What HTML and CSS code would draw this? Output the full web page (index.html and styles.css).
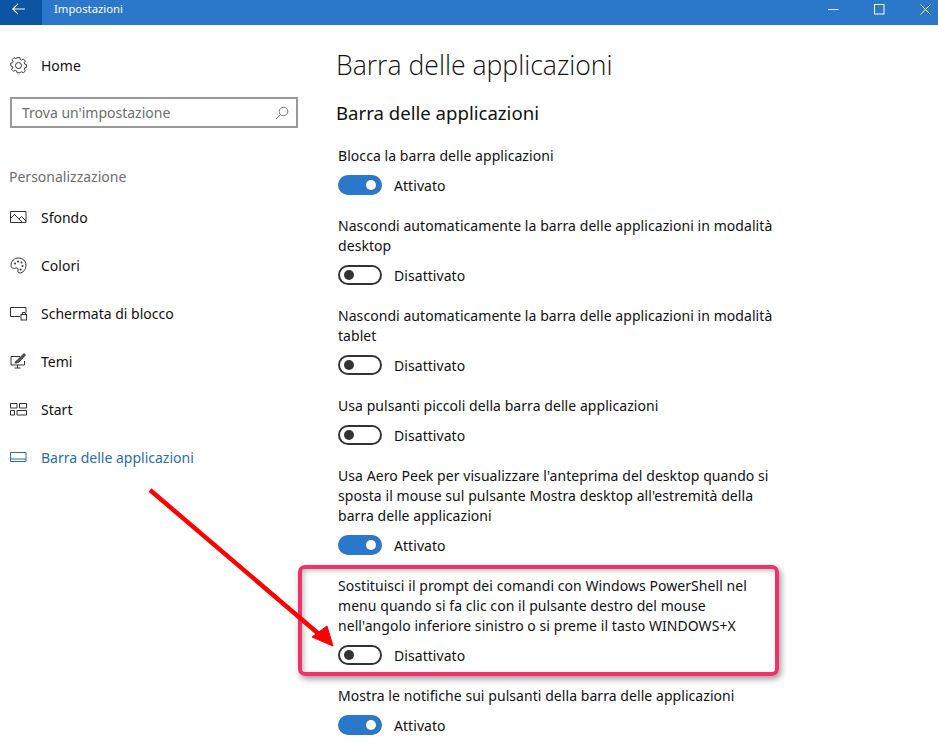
FILE: index.html
```html
<!DOCTYPE html>
<html lang="it">
<head>
<meta charset="utf-8">
<title>Impostazioni</title>
<link rel="stylesheet" href="styles.css">
</head>
<body>
<header class="titlebar">
  <div class="back"><svg width="13" height="12" viewBox="0 0 13 12"><path d="M.8 6H13M6 .8.800 6 6 11.200" fill="none" stroke="#fff" stroke-width="1.100"/></svg></div>
  <div class="apptitle">Impostazioni</div>
  <div class="winbtns">
    <svg width="11" height="11" viewBox="0 0 11 11"><path d="M0 5.500H10.500" stroke="#fff" fill="none"/></svg>
    <svg width="11" height="11" viewBox="0 0 11 11"><rect x=".5" y=".5" width="9.500" height="9.500" stroke="#fff" fill="none"/></svg>
    <svg width="11" height="11" viewBox="0 0 11 11"><path d="M.5.500 10.500 10.500M10.500.500.500 10.500" stroke="#fff" fill="none"/></svg>
  </div>
</header>
<div class="layout">
  <nav class="sidebar">
    <div class="navitem home">
      <svg class="ico" width="17" height="17" viewBox="0 0 17 17"><path d="M7 1h3l.4 2 1.500.7 1.800-1.100 2 2.100-1.100 1.700.6 1.600 1.900.4v2.900l-1.900.4-.6 1.600 1.100 1.700-2 2.100-1.800-1.100-1.500.7L10 17H7l-.4-1.900-1.500-.7-1.800 1.100-2-2.100 1.100-1.700-.6-1.600L.4 9.700V6.800l1.900-.4.6-1.600-1.100-1.700 2-2.100 1.800 1.100 1.500-.7z" transform="translate(.4 -.4) scale(.95)" fill="none" stroke="#333"/><circle cx="8.500" cy="8.500" r="3" fill="none" stroke="#333"/></svg>
      <span>Home</span>
    </div>
    <div class="search"><span>Trova un'impostazione</span><svg width="14" height="14" viewBox="0 0 14 14"><circle cx="8.500" cy="5.500" r="4.300" fill="none" stroke="#777"/><path d="M5.500 8.500 1 13" stroke="#777" fill="none"/></svg></div>
    <div class="navhead">Personalizzazione</div>
    <div class="navitem">
      <svg class="ico" width="17" height="14" viewBox="0 0 17 14"><path d="M.5 1.500h15.500v11H.5zM.5 8.500l4-4 8 8M9 9l2.500-2.500 4.500 4.500" fill="none" stroke="#333"/></svg>
      <span>Sfondo</span>
    </div>
    <div class="navitem">
      <svg class="ico" width="17" height="17" viewBox="0 0 17 17"><path d="M8.500 1C12.500 1 16 4 16 8c0 5-3.500 8-6 8-2 0-2.500-1.500-2-3 .4-1.300-.5-2.500-2-2-2 .6-5 .5-5-2.500C1 4 4.500 1 8.500 1z" fill="none" stroke="#333"/><circle cx="5" cy="6.500" r="1" fill="#333"/><circle cx="8" cy="4.500" r="1" fill="#333"/><circle cx="11.500" cy="5.500" r="1" fill="#333"/><circle cx="12.500" cy="9" r="1" fill="#333"/><circle cx="10.500" cy="12.500" r="1" fill="#333"/></svg>
      <span>Colori</span>
    </div>
    <div class="navitem">
      <svg class="ico" width="17" height="15" viewBox="0 0 17 15"><path d="M10 10.500H.5V1.500h15.500v5" fill="none" stroke="#333"/><rect x="11" y="8.500" width="5.500" height="5.500" fill="none" stroke="#333"/><path d="M12.300 8.500V6.500h3v2" fill="none" stroke="#333"/></svg>
      <span>Schermata di blocco</span>
    </div>
    <div class="navitem">
      <svg class="ico" width="17" height="16" viewBox="0 0 17 16"><path d="M10 3.500H1v8.500h13.500V8M7.500 12v3M4.500 15h6" fill="none" stroke="#333"/><path d="M5 10c.3-1.500 1-2 2-2.500l7-7 1.500 1.500-6.500 7c-1 .8-2.500 1-4 1z" fill="#555" stroke="#333" stroke-width=".9"/></svg>
      <span>Temi</span>
    </div>
    <div class="navitem">
      <svg class="ico" width="17" height="14" viewBox="0 0 17 14"><path d="M.5 1.500h6.500v4.500H.5zM9.500 1.500h7v4.500h-7zM.5 8.500h4v4.500h-4zM7 8.500h9.500v4.500H7z" fill="none" stroke="#333"/></svg>
      <span>Start</span>
    </div>
    <div class="navitem active">
      <svg class="ico" width="17" height="12" viewBox="0 0 17 12"><path d="M.5 1.500h15.500v9H.5zM.5 8h15.500" fill="none" stroke="#2b6ea6"/></svg>
      <span>Barra delle applicazioni</span>
    </div>
  </nav>
  <main class="content">
    <h1>Barra delle applicazioni</h1>
    <h2>Barra delle applicazioni</h2>
    <section class="setting">
      <p>Blocca la barra delle applicazioni</p>
      <div class="state"><i class="toggle on"></i><span>Attivato</span></div>
    </section>
    <section class="setting">
      <p>Nascondi automaticamente la barra delle applicazioni in modalità<br>desktop</p>
      <div class="state"><i class="toggle"></i><span>Disattivato</span></div>
    </section>
    <section class="setting">
      <p>Nascondi automaticamente la barra delle applicazioni in modalità<br>tablet</p>
      <div class="state"><i class="toggle"></i><span>Disattivato</span></div>
    </section>
    <section class="setting">
      <p>Usa pulsanti piccoli della barra delle applicazioni</p>
      <div class="state"><i class="toggle"></i><span>Disattivato</span></div>
    </section>
    <section class="setting">
      <p>Usa Aero Peek per visualizzare l'anteprima del desktop quando si<br>sposta il mouse sul pulsante Mostra desktop all'estremità della<br>barra delle applicazioni</p>
      <div class="state"><i class="toggle on"></i><span>Attivato</span></div>
    </section>
    <section class="setting">
      <p>Sostituisci il prompt dei comandi con Windows PowerShell nel<br>menu quando si fa clic con il pulsante destro del mouse<br>nell'angolo inferiore sinistro o si preme il tasto WINDOWS+X</p>
      <div class="state"><i class="toggle"></i><span>Disattivato</span></div>
    </section>
    <section class="setting">
      <p>Mostra le notifiche sui pulsanti della barra delle applicazioni</p>
      <div class="state"><i class="toggle on"></i><span>Attivato</span></div>
    </section>
  </main>
</div>
<div class="callout"></div>
<svg class="arrow" width="938" height="750" viewBox="0 0 938 750"><path d="M150 490 320 635" stroke="#f00" stroke-width="4.500" fill="none"/><path d="M333 646 312 637 327 626z" fill="#f00" stroke="#f00" stroke-linejoin="round"/></svg>
</body>
</html>
```
FILE: styles.css
```css
html, body {
  margin: 0;
  padding: 0;
  height: 750px;
  overflow: hidden;
  background: #fff;
}
body {
  position: relative;
  font-family: "Noto Sans", "Open Sans", sans-serif;
  font-size: 14px;
  color: #111;
}
.titlebar {
  display: flex;
  align-items: center;
  height: 25px;
  background: #2b77c9;
  color: #fff;
}
.back {
  display: flex;
  justify-content: center;
  align-items: center;
  width: 42px;
  height: 100%;
  padding: 0 5px 8px 0;
  box-sizing: border-box;
  background: #0b54a2;
}
.apptitle {
  margin-left: 12px;
  padding-bottom: 9px;
  font-size: 11.300px;
  flex: 1;
}
.winbtns {
  display: flex;
  gap: 35px;
  padding: 0 7px 7px 0;
}
.layout {
  display: flex;
}
.sidebar {
  width: 300px;
  padding: 16px 0 0 0;
}
.navitem {
  display: flex;
  align-items: center;
  height: 48px;
  padding-left: 10px;
}
.navitem .ico {
  width: 17px;
  flex: none;
  margin-right: 14px;
}
.navitem.active {
  color: #2b6ea6;
}
.search {
  display: flex;
  align-items: center;
  justify-content: space-between;
  width: 288px;
  height: 31px;
  margin: 8px 0 0 10px;
  padding: 0 7px 0 10px;
  box-sizing: border-box;
  border: 2px solid #999;
  color: #6e6e6e;
}
.navhead {
  margin: 39px 0 0 9px;
  height: 20px;
  line-height: 20px;
  color: #6e6e6e;
}
.navhead + .navitem {
  margin-top: 6px;
}
.content {
  padding: 0 0 0 38px;
  flex: 1;
  letter-spacing: .06px;
}
h1 {
  margin: 19px 0 0 -2px;
  height: 42px;
  line-height: 42px;
  font-size: 26.600px;
  font-weight: 300;
  font-family: "Open Sans", "Noto Sans", sans-serif;
  letter-spacing: 0;
  color: #111;
}
h2 {
  margin: 13px 0 0 -2px;
  height: 28px;
  line-height: 28px;
  font-size: 18.600px;
  font-weight: 400;
  letter-spacing: 0;
  color: #111;
}
.setting {
  margin-top: 21px;
}
h2 + .setting {
  margin-top: 19px;
}
.setting p {
  margin: 0;
  line-height: 20px;
  white-space: nowrap;
}
.state {
  display: flex;
  align-items: center;
  gap: 12px;
  height: 20px;
  margin-top: 9px;
}
.toggle {
  position: relative;
  display: block;
  width: 44px;
  height: 20px;
  box-sizing: border-box;
  border: 2px solid #333;
  border-radius: 10px;
}
.toggle::after {
  content: "";
  position: absolute;
  top: 3px;
  left: 4px;
  width: 10px;
  height: 10px;
  border-radius: 50%;
  background: #333;
}
.toggle.on {
  background: #2b77c9;
  border-color: #2b77c9;
}
.toggle.on::after {
  left: auto;
  right: 4px;
  background: #fff;
}
.callout {
  position: absolute;
  left: 298px;
  top: 565px;
  width: 481px;
  height: 111px;
  box-sizing: border-box;
  border: 4px solid #f0326c;
  border-radius: 7px;
  box-shadow: 2px 3px 6px rgba(0, 0, 0, .4), inset 2px 2px 5px rgba(0, 0, 0, .25);
}
.arrow {
  position: absolute;
  left: 0;
  top: 0;
  pointer-events: none;
}
```
